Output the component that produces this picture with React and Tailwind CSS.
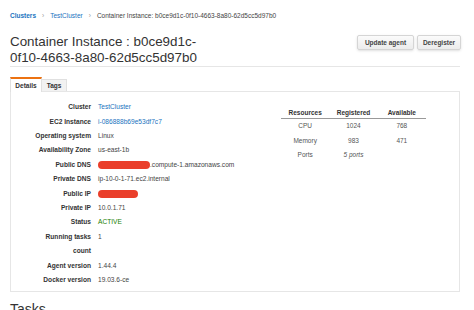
import React from "react";

const details = [
  ["Cluster", <span className="text-[#1a73c0]">TestCluster</span>],
  ["EC2 Instance", <span className="text-[#1a73c0]">i-086888b69e53df7c7</span>],
  ["Operating system", "Linux"],
  ["Availability Zone", "us-east-1b"],
  [
    "Public DNS",
    <span className="flex items-center">
      <span className="inline-block w-[52px] h-[8px] rounded-full bg-[#ea3f2b]" />
      <span>.compute-1.amazonaws.com</span>
    </span>,
  ],
  ["Private DNS", "ip-10-0-1-71.ec2.internal"],
  ["Public IP", <span className="inline-block w-[40px] h-[8px] rounded-full bg-[#ea3f2b]" />],
  ["Private IP", "10.0.1.71"],
  ["Status", <span className="text-[#1d8102]">ACTIVE</span>],
  ["Running tasks", "1"],
  ["count", ""],
  ["Agent version", "1.44.4"],
  ["Docker version", "19.03.6-ce"],
];

const resources = [
  ["CPU", "1024", "768"],
  ["Memory", "983", "471"],
  ["Ports", <i>5 ports</i>, ""],
];

export default function App() {
  return (
    <div
      className="w-[474px] h-[310px] overflow-hidden bg-white pl-[10px] pr-[14px] pt-[10px] text-[#444]"
      style={{ fontFamily: '"Liberation Sans", Arial, sans-serif' }}
    >
      {/* Breadcrumb */}
      <div className="flex items-center gap-[6px] h-[11px] text-[6.5px] leading-[11px]">
        <span className="text-[#1a73c0] font-bold">Clusters</span>
        <span className="text-[#999]">›</span>
        <span className="text-[#1a73c0]">TestCluster</span>
        <span className="text-[#999]">›</span>
        <span className="text-[#444]">Container Instance: b0ce9d1c-0f10-4663-8a80-62d5cc5d97b0</span>
      </div>

      {/* Header */}
      <div className="flex justify-between items-start mt-[13px] border-b border-[#e6e6e6]">
        <h1 className="text-[13.4px] leading-[16px] text-[#333] w-[200px]">
          Container Instance : b0ce9d1c-0f10-4663-8a80-62d5cc5d97b0
        </h1>
        <div className="flex gap-[3px] mt-[1px] mr-[-1px]">
          <button className="h-[15px] w-[57px] text-[6.5px] font-bold text-[#444] rounded-[2px] border border-[#d5d5d5] bg-gradient-to-b from-[#fbfbfb] to-[#ececec] shadow-sm">
            Update agent
          </button>
          <button className="h-[15px] w-[44px] text-[6.5px] font-bold text-[#444] rounded-[2px] border border-[#d5d5d5] bg-gradient-to-b from-[#fbfbfb] to-[#ececec] shadow-sm">
            Deregister
          </button>
        </div>
      </div>

      {/* Tabs */}
      <div className="flex items-end mt-[9px] h-[15px] text-[6.5px] font-bold text-[#333]">
        <div className="h-[15px] w-[32px] flex items-center justify-center bg-white border-t-2 border-[#ec7211] border-x border-x-[#e0e0e0] relative top-[1px]">
          Details
        </div>
        <div className="h-[12px] w-[25px] flex items-center justify-center bg-[#f2f2f2] border-t border-r border-[#e0e0e0]">
          Tags
        </div>
      </div>

      {/* Panel */}
      <div className="flex h-[201px] border border-[#e6e6e6] text-[6.6px]">
        <div className="w-[270px] pt-[8px]">
          {details.map(([label, value], i) => (
            <div key={i} className="flex items-center h-[14.4px]">
              <div className="w-[80px] text-right font-bold text-[#333]">{label}</div>
              <div className="ml-[7px] flex items-center">{value}</div>
            </div>
          ))}
        </div>
        <div className="w-[145px] mt-[15px] text-[6.5px]">
          <div className="grid grid-cols-3 h-[12px] items-center border-b border-[#999] font-bold text-[#333] text-center">
            <span>Resources</span>
            <span>Registered</span>
            <span>Available</span>
          </div>
          {resources.map(([a, b, c], i) => (
            <div key={i} className="grid grid-cols-3 h-[14.5px] items-center text-center text-[#555] first:mt-[1px]">
              <span>{a}</span>
              <span>{b}</span>
              <span>{c}</span>
            </div>
          ))}
        </div>
      </div>

      {/* Tasks */}
      <div className="mt-[10px] text-[14px] leading-[14px] text-[#333]">Tasks</div>
    </div>
  );
}
